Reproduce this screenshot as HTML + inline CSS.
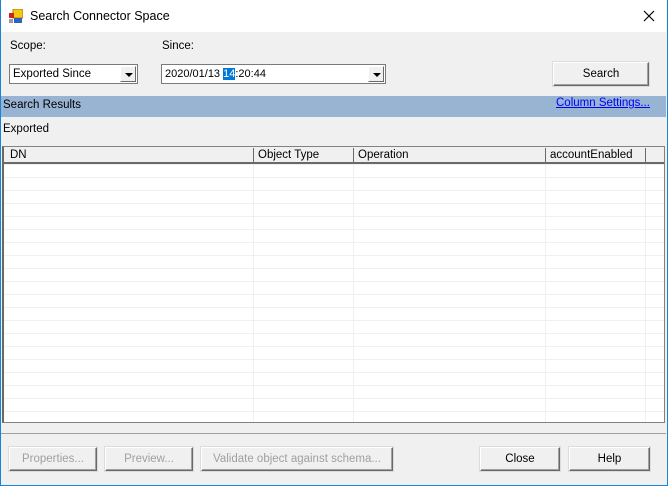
<!DOCTYPE html>
<html><head><meta charset="utf-8"><style>
*{box-sizing:border-box;margin:0;padding:0}
body{width:668px;height:486px;overflow:hidden;background:#f0f0f0;font-family:"Liberation Sans",sans-serif;font-size:11.5px;color:#000;position:relative}
.win{position:absolute;left:0;top:0;width:668px;height:486px;border:1px solid #1883d7;border-top:none}
.title{position:absolute;left:0;top:0;width:666px;height:32px;background:#fff}
.abs{position:absolute}
.combo{position:absolute;background:#fff;border:1px solid #7a7a7a;height:20px}
.arrow{position:absolute;right:1px;top:1px;width:16px;height:16px;background:#f0f0f0;border:1px solid;border-color:#fff #696969 #696969 #fff}
.arrow:after{content:"";position:absolute;left:4px;top:6px;border-left:4px solid transparent;border-right:4px solid transparent;border-top:4px solid #000}
.btn{position:absolute;height:24px;background:#f0f0f0;border:1px solid;border-color:#fff #696969 #696969 #fff;box-shadow:inset -1px -1px #a0a0a0,0 0 0 1px #dcdcdc;text-align:center;line-height:22px}
.dis{color:#a0a0a0}
.hdr{position:absolute;top:148px;height:16px;border-right:1px solid #696969;border-bottom:2px solid #696969;background:#f0f0f0;padding-left:6px;line-height:14px}
.vl{position:absolute;top:165px;width:1px;height:257px;background:#f0f0f0}
</style></head><body>
<div class="title">
<svg class="abs" style="left:9px;top:9px" width="14" height="14"><rect x="4" y="0" width="10" height="9" fill="#f5c518" stroke="#b08000"/><rect x="0" y="4" width="5" height="5" fill="#d02020"/><rect x="5" y="9" width="8" height="5" fill="#3060c0"/><rect x="0" y="10" width="4" height="4" fill="#999"/></svg>
<div class="abs" style="left:30px;top:9px;font-size:12.5px">Search Connector Space</div>
<svg class="abs" style="left:643px;top:10px" width="12" height="12"><path d="M1 1L11 11M11 1L1 11" stroke="#000" stroke-width="1.2"/></svg>
</div>
<div class="win"></div>
<div class="abs" style="left:10px;top:40px">Scope:</div>
<div class="abs" style="left:162px;top:40px">Since:</div>
<div class="combo" style="left:9px;top:64px;width:129px"><span class="abs" style="left:3px;top:3px">Exported Since</span><div class="arrow"></div></div>
<div class="combo" style="left:161px;top:64px;width:225px"><span class="abs" style="left:3px;top:3px;font-size:11px">2020/01/13 <span style="background:#0078d7;color:#fff">14</span>:20:44</span><div class="arrow"></div></div>
<div class="btn" style="left:553px;top:62px;width:96px">Search</div>
<div class="abs" style="left:1px;top:96px;width:665px;height:21px;background:#98b4d2"></div>
<div class="abs" style="left:3px;top:99px">Search Results</div>
<div class="abs" style="left:556px;top:97px;color:#0000ff;text-decoration:underline">Column Settings...</div>
<div class="abs" style="left:3px;top:123px">Exported</div>
<div class="abs" style="left:2px;top:146px;width:663px;height:277px;border:1px solid #828282;border-left:2px solid #696969;background:#fff repeating-linear-gradient(to bottom,#fff 0,#fff 12px,#f0f0f0 12px,#f0f0f0 13px);background-position:0 18px"></div>
<div class="abs" style="left:4px;top:147px;width:660px;height:18px;background:#f0f0f0"></div>
<div class="hdr" style="left:4px;width:250px">DN</div>
<div class="hdr" style="left:254px;width:100px;padding-left:4px">Object Type</div>
<div class="hdr" style="left:354px;width:192px;padding-left:4px">Operation</div>
<div class="hdr" style="left:546px;width:100px;padding-left:4px">accountEnabled</div>
<div class="hdr" style="left:646px;width:18px;border-right:none"></div>
<div class="vl" style="left:253px"></div><div class="vl" style="left:353px"></div><div class="vl" style="left:545px"></div><div class="vl" style="left:645px"></div>
<div class="abs" style="left:1px;top:433px;width:665px;height:1px;background:#a0a0a0"></div>
<div class="btn dis" style="left:9px;top:447px;width:88px">Properties...</div>
<div class="btn dis" style="left:105px;top:447px;width:88px">Preview...</div>
<div class="btn dis" style="left:201px;top:447px;width:192px">Validate object against schema...</div>
<div class="btn" style="left:480px;top:447px;width:80px">Close</div>
<div class="btn" style="left:569px;top:447px;width:81px">Help</div>
</body></html>
